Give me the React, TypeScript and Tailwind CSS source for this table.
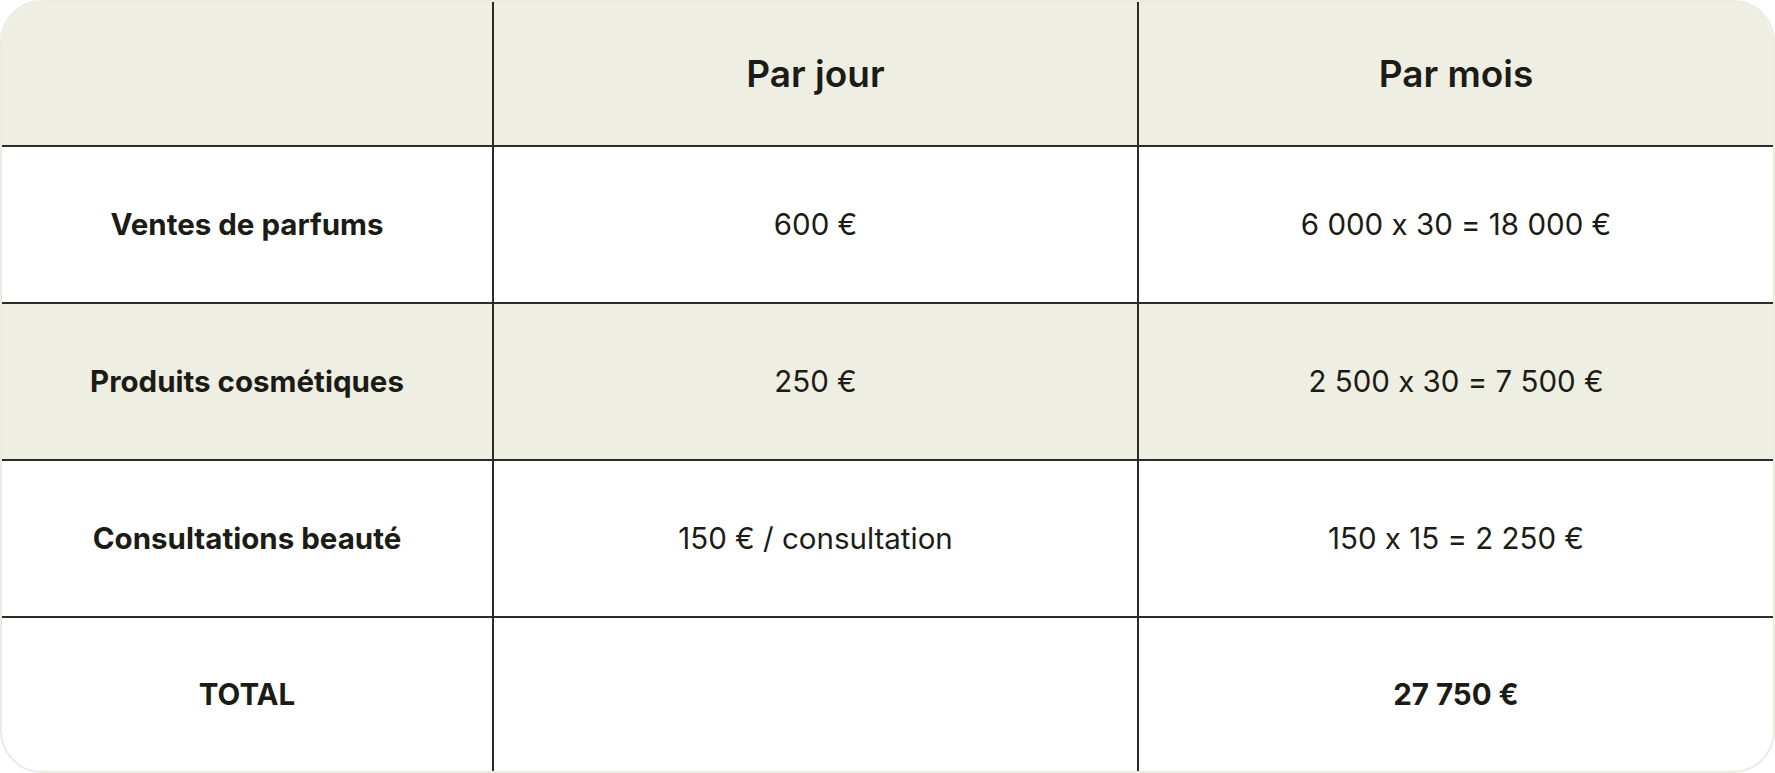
import React from "react";

const rows = [
  { label: "Ventes de parfums", day: "600 €", month: "6 000 x 30 = 18 000 €", tint: false },
  { label: "Produits cosmétiques", day: "250 €", month: "2 500 x 30 = 7 500 €", tint: true },
  { label: "Consultations beauté", day: "150 € / consultation", month: "150 x 15 = 2 250 €", tint: false },
];

const cell = "flex items-center justify-center text-center";

export default function App() {
  return (
    <div
      className="w-[1775px] h-[773px] bg-white [font-variant-ligatures:no-contextual]"
      style={{ fontFamily: "Inter, 'Noto Sans', sans-serif" }}
    >
      <div className="h-full rounded-[42px] border-2 border-[#ecebe0] overflow-hidden text-[#1c1c16]">
        <div className="grid h-full grid-cols-[492px_645px_1fr] grid-rows-[145px_157px_157px_157px_1fr]">
          {/* header */}
          <div className={`${cell} bg-[#efeee3] border-r-2 border-b-2 border-[#2b2b27]`} />
          <div className={`${cell} bg-[#efeee3] border-r-2 border-b-2 border-[#2b2b27] text-[37px] font-semibold`}>
            Par jour
          </div>
          <div className={`${cell} bg-[#efeee3] border-b-2 border-[#2b2b27] text-[37px] font-semibold`}>
            Par mois
          </div>

          {rows.map((r) => (
            <React.Fragment key={r.label}>
              <div className={`${cell} ${r.tint ? "bg-[#efeee3]" : "bg-white"} border-r-2 border-b-2 border-[#2b2b27] text-[29.5px] font-bold`}>
                {r.label}
              </div>
              <div className={`${cell} ${r.tint ? "bg-[#efeee3]" : "bg-white"} border-r-2 border-b-2 border-[#2b2b27] text-[29.5px] font-normal`}>
                {r.day}
              </div>
              <div className={`${cell} ${r.tint ? "bg-[#efeee3]" : "bg-white"} border-b-2 border-[#2b2b27] text-[29.5px] font-normal`}>
                {r.month}
              </div>
            </React.Fragment>
          ))}

          {/* total */}
          <div className={`${cell} border-r-2 border-[#2b2b27] text-[29.5px] font-bold`}>TOTAL</div>
          <div className={`${cell} border-r-2 border-[#2b2b27]`} />
          <div className={`${cell} text-[29.5px] font-bold`}>27 750 €</div>
        </div>
      </div>
    </div>
  );
}
